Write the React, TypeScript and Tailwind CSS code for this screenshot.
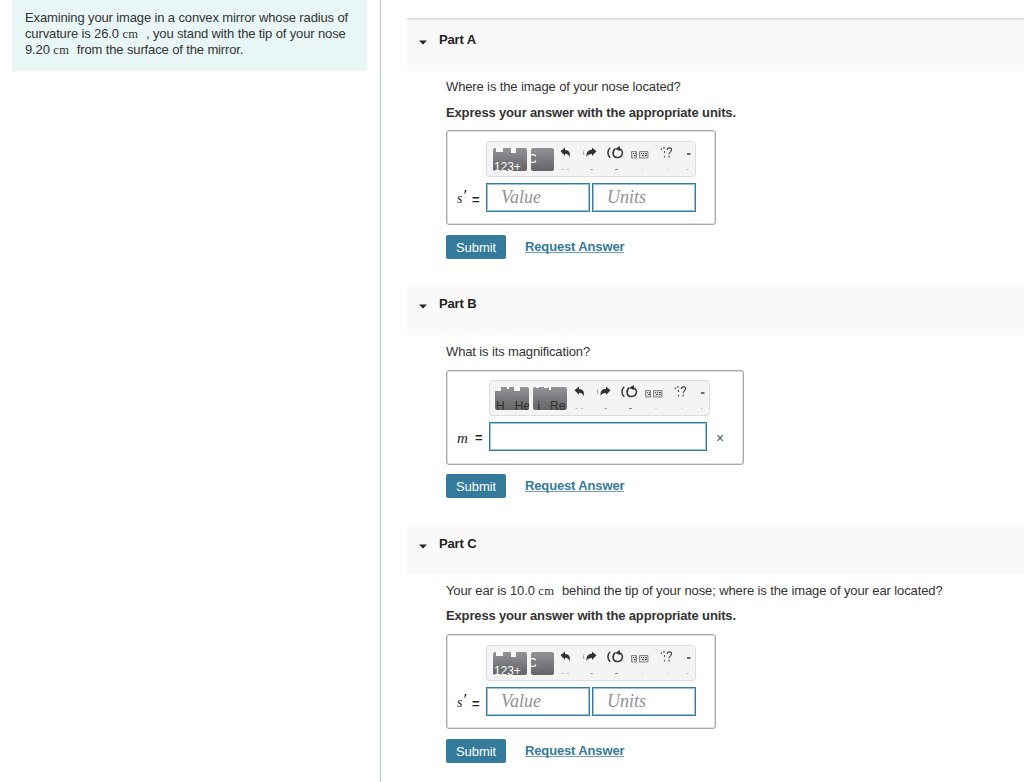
import React from 'react';

const Unit: React.FC<{ children: string }> = ({ children }) => (
  <span className="font-['Liberation_Serif',serif] text-[12.5px] tracking-[0.4px] mr-[4px]">{children}</span>
);

const TextButton: React.FC<{ label: string; width: string; dark?: boolean; tops: number[][] }> = ({ label, width, dark, tops }) => (
  <div className={`relative h-[23px] shrink-0 overflow-hidden rounded-[2px] bg-linear-to-b from-[#929297] to-[#656568] ${width}`}>
    {tops.map(([x, w, h]) => (
      <i key={x} className="absolute top-0 bg-[#f8f8f8]" style={{ left: x, width: w, height: h }} />
    ))}
    <span
      className={`absolute whitespace-pre leading-[12px] ${
        label === 'C' ? '-left-[3px] top-[5px] text-[12px] text-white' : dark ? 'left-px top-[13px] text-[12px] text-[#303032]' : 'left-px top-[13px] text-[12px] tracking-[-0.1px] text-white'
      }`}
    >
      {label}
    </span>
  </div>
);

const Slot: React.FC<{ children: React.ReactNode }> = ({ children }) => (
  <svg width="25" height="34" viewBox="0 0 25 34" className="shrink-0" fill="none" stroke="#3b3b3b">
    {children}
  </svg>
);

const ToolIcons: React.FC = () => (
  <div className="flex">
    <Slot>
      <path d="M7.5 9.300 12 5.500v2.400c4.200.1 5.900 3 4.300 7.600-.2-2.500-1.600-3.700-4.300-3.700v2z" fill="#333" stroke="none" />
      <path d="M8.500 27.500h2M14 27.500h2" stroke="#bbb" />
    </Slot>
    <Slot>
      <path d="M18.500 9.300 14 5.500v2.200c-4.200.1-6 3-5.300 7.200.8-2.200 2.400-3 5.300-3v2z" fill="#333" stroke="none" />
      <path d="M6 8.500c-.8 1.500-.8 3 0 4.500" stroke="#999" />
      <path d="M12.500 27.500h2.200" stroke="#999" />
    </Slot>
    <Slot>
      <path d="M7.300 5.800c-3.200 2.700-3.200 7.300 0 10" strokeWidth="1.500" />
      <path d="M12.300 6.700c-3.800 3-2.600 8.800 2.200 8.800 5 0 6.500-5.600 2.800-8.600" strokeWidth="1.600" />
      <path d="m12 6.900 5-2.900v5z" fill="#333" stroke="none" />
      <path d="M12 27.500h3" stroke="#888" />
    </Slot>
    <Slot>
      <path d="M3.500 9.500h5v6.500h-5zM11.500 9.500h8.500v6.500h-8.500z" fill="#d8d8d8" stroke="#888" />
      <path d="M5 11.500h1m1 0h1M6 13.500h2M13 11.500h1m1 0h1m1 0h2M14 13.500h2m1 0h2" stroke="#555" />
      <path d="M13.500 27.500h1" stroke="#bbb" />
    </Slot>
    <Slot>
      <path d="M8 8.200c.4-2 2.200-2.800 4-2.200M11.500 9v3M11.500 14v1.500" strokeDasharray="2 1" stroke="#555" strokeWidth="1.200" />
      <path d="M14.300 8c0-2.900 4.500-2.800 4.300-.2-.2 2-2.500 2.200-2.500 4.500M16.100 13.800v1.700" strokeWidth="1.200" stroke="#484848" />
      <path d="M14.500 27.500h1" stroke="#bbb" />
    </Slot>
    <Slot>
      <path d="M9 12h3.500" strokeWidth="1.300" />
      <path d="M9 27.500h1.200" stroke="#aaa" />
    </Slot>
  </div>
);

const Toolbar: React.FC<{ wide?: boolean }> = ({ wide }) => (
  <div className={`flex h-[36px] overflow-hidden rounded-[4px] border border-[#dcdcdc] bg-[#f4f4f4] ${wide ? 'w-[221px]' : 'w-[210px]'}`}>
    <div className={`flex shrink-0 gap-[4px] pt-[6px] ${wide ? 'w-[77px] pl-[5px]' : 'w-[66px] pl-[6px]'}`}>
      {wide ? (
        <>
          <TextButton label="H   He" width="w-[34px]" dark tops={[[0, 6, 4], [12, 2, 2], [19, 6, 4]]} />
          <TextButton label=" i   Re" width="w-[34px]" dark tops={[[3, 3, 1], [11, 4, 1], [16, 2, 3]]} />
        </>
      ) : (
        <>
          <TextButton label="123+" width="w-[34px]" tops={[[3, 7, 4], [18, 5, 5]]} />
          <TextButton label="C" width="w-[23px]" tops={[]} />
        </>
      )}
    </div>
    <ToolIcons />
  </div>
);

const Field: React.FC<{ placeholder?: string; width: string }> = ({ placeholder, width }) => (
  <div
    className={`h-[29px] border border-[#2f7fa2] bg-white pl-[14px] font-['Liberation_Serif',serif] text-[18px] leading-[27px] italic text-[#929292] shadow-[inset_0_0_0_1px_#9cc3d4] ${width}`}
  >
    {placeholder}
  </div>
);

const boxClass = 'flex h-[95px] rounded-[3px] border border-[#a9a9a9] shadow-[inset_0_0_0_1px_#dedede]';

const ValueAnswer: React.FC = () => (
  <div className={`w-[270px] pt-[10px] ${boxClass}`}>
    <div className="flex w-[39px] shrink-0 pl-[10px] pt-[46px] font-['Liberation_Serif',serif] text-[14px] leading-[24px] text-[#222]">
      <span className="w-[15px] italic">
        s<span className="relative -top-[2px] text-[17px] leading-[10px]">′</span>
      </span>
      <span className="pt-px font-['Liberation_Sans',sans-serif] text-[13px] font-bold">=</span>
    </div>
    <div>
      <Toolbar />
      <div className="mt-[6px] flex gap-[2px]">
        <Field placeholder="Value" width="w-[104px]" />
        <Field placeholder="Units" width="w-[104px]" />
      </div>
    </div>
  </div>
);

const PlainAnswer: React.FC = () => (
  <div className={`w-[298px] pt-[9px] ${boxClass}`}>
    <div className="flex w-[42px] shrink-0 pl-[10px] pt-[46px] font-['Liberation_Serif',serif] text-[15px] leading-[24px] text-[#222]">
      <span className="w-[18px] italic">m</span>
      <span className="font-['Liberation_Sans',sans-serif] text-[13px] font-bold">=</span>
    </div>
    <div>
      <Toolbar wide />
      <div className="mt-[6px] flex gap-[9px]">
        <Field width="w-[218px]" />
        <span className="pt-[4px] text-[14px] leading-[24px] text-[#555]">×</span>
      </div>
    </div>
  </div>
);

const Actions: React.FC = () => (
  <div className="flex">
    <button className="h-[24px] w-[60px] rounded-[2px] bg-[#347a9b] pt-px text-[13px] leading-[23px] tracking-[-0.05px] text-white">Submit</button>
    <a className="ml-[19px] mt-[4px] h-[14px] whitespace-nowrap border-b border-[#6fa2ba] text-[13px] leading-[15px] font-bold tracking-[-0.14px] text-[#347a9b]">
      Request Answer
    </a>
  </div>
);

const PartHeader: React.FC<{ title: string; className: string }> = ({ title, className }) => (
  <div className={`flex bg-[#f9f9f9] pl-[12px] ${className}`}>
    <svg width="8" height="5" viewBox="0 0 8 5" className="mt-[20px]">
      <path d="M0 .5h8l-4 4z" fill="#222" />
    </svg>
    <h2 className="ml-[12px] pt-[12px] text-[13px] leading-[15px] font-bold tracking-[-0.15px] text-[#222]">{title}</h2>
  </div>
);

export default function App() {
  return (
    <div className="flex h-[782px] w-[1024px] overflow-hidden bg-white font-['Liberation_Sans',Arial,sans-serif] text-[13px] text-[#333]">
      <aside className="w-[381px] shrink-0 border-r border-[#b4c8d8] pl-[12px]">
        <div className="h-[71px] w-[355px] whitespace-nowrap bg-[#e8f6f6] pl-[13px] pt-[10px] leading-[15.6px] tracking-[-0.13px]">
          <p>Examining your image in a convex mirror whose radius of</p>
          <p>curvature is 26.0 <Unit>cm</Unit> , you stand with the tip of your nose</p>
          <p>9.20 <Unit>cm</Unit> from the surface of the mirror.</p>
        </div>
      </aside>

      <main className="ml-[26px] w-[617px] whitespace-nowrap pt-[18px]">
        <section className="h-[266px]">
          <PartHeader title="Part A" className="h-[53px] border-t-2 border-[#e0e0e0]" />
          <div className="pl-[39px] pt-[8px]">
            <p className="h-[26px] leading-[15px] tracking-[-0.13px]">Where is the image of your nose located?</p>
            <p className="mb-[10px] leading-[15px] font-bold tracking-[-0.15px]">Express your answer with the appropriate units.</p>
            <ValueAnswer />
            <div className="h-[10px]" />
            <Actions />
          </div>
        </section>

        <section className="h-[240px]">
          <PartHeader title="Part B" className="h-[51px]" />
          <div className="pl-[39px] pt-[9px]">
            <p className="mb-[11px] leading-[15px] tracking-[-0.13px]">What is its magnification?</p>
            <PlainAnswer />
            <div className="h-[9px]" />
            <Actions />
          </div>
        </section>

        <section>
          <PartHeader title="Part C" className="h-[50px]" />
          <div className="pl-[39px] pt-[9px]">
            <p className="h-[25px] leading-[15px] tracking-[-0.11px]">
              Your ear is 10.0 <Unit>cm</Unit> behind the tip of your nose; where is the image of your ear located?
            </p>
            <p className="mb-[11px] leading-[15px] font-bold tracking-[-0.15px]">Express your answer with the appropriate units.</p>
            <ValueAnswer />
            <div className="h-[10px]" />
            <Actions />
          </div>
        </section>
      </main>
    </div>
  );
}
